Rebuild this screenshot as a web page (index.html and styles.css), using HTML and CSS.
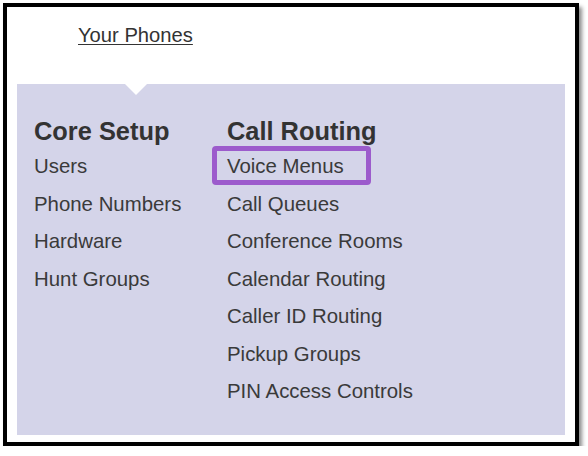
FILE: index.html
```html
<!DOCTYPE html>
<html lang="en">
<head>
    <meta charset="UTF-8">
    <meta name="viewport" content="width=device-width, initial-scale=1.0">
    <title>Your Phones</title>
    <link rel="stylesheet" href="styles.css">
</head>
<body>
    <div id="frame">
        <div id="top-nav">
            <a href="#" class="nav-link">Your Phones</a>
        </div>

        <div id="menu-panel">
            <div class="menu-column">
                <h3>Core Setup</h3>
                <ul>
                    <li><a href="#">Users</a></li>
                    <li><a href="#">Phone Numbers</a></li>
                    <li><a href="#">Hardware</a></li>
                    <li><a href="#">Hunt Groups</a></li>
                </ul>
            </div>
            <div class="menu-column">
                <h3>Call Routing</h3>
                <ul>
                    <li class="highlight"><a href="#">Voice Menus</a></li>
                    <li><a href="#">Call Queues</a></li>
                    <li><a href="#">Conference Rooms</a></li>
                    <li><a href="#">Calendar Routing</a></li>
                    <li><a href="#">Caller ID Routing</a></li>
                    <li><a href="#">Pickup Groups</a></li>
                    <li><a href="#">PIN Access Controls</a></li>
                </ul>
            </div>
        </div>
    </div>
</body>
</html>
```

FILE: styles.css
```css
body {
    margin: 0;
    background: #fff;
    font-family: "Liberation Sans", Arial, sans-serif;
    color: #363636;
}

/* Moldura da captura */
#frame {
    margin: 3px 0 0 3px;
    width: 568px;
    height: 435px;
    border: 4px solid #000;
    box-shadow: 3px 4px 4px rgba(0, 0, 0, 0.45);
    background: #fff;
}

/* Navegação superior */
#top-nav {
    height: 60px;
    padding: 17px 0 0 71px;
}

.nav-link {
    font-size: 20.2px;
    line-height: 23px;
    color: #333;
    text-decoration: underline;
    text-underline-offset: 2px;
    text-decoration-thickness: 1px;
}

/* Painel do menu */
#menu-panel {
    position: relative;
    margin: 0 10px;
    height: 319px;
    padding: 32px 0 0 17px;
    background: #d4d4e9;
    display: grid;
    grid-template-columns: 193px auto;
}

#menu-panel::before {
    content: "";
    position: absolute;
    top: 0;
    left: 108px;
    border-left: 11px solid transparent;
    border-right: 11px solid transparent;
    border-top: 11px solid #fff;
}

.menu-column h3 {
    margin: 0 0 2px;
    font-size: 25.4px;
    line-height: 30px;
    font-weight: bold;
    color: #333;
}

.menu-column ul {
    list-style: none;
    margin: 0;
    padding: 0;
}

.menu-column li {
    font-size: 20.4px;
    line-height: 37.5px;
}

.menu-column li a {
    color: #3a3a3a;
    text-decoration: none;
}

/* Destaque do item */
.menu-column li.highlight {
    position: relative;
}

.menu-column li.highlight::after {
    content: "";
    position: absolute;
    top: -2px;
    left: -15px;
    width: 159px;
    height: 39px;
    box-sizing: border-box;
    border: 5px solid #9c5bcc;
    border-radius: 4px;
}
```
